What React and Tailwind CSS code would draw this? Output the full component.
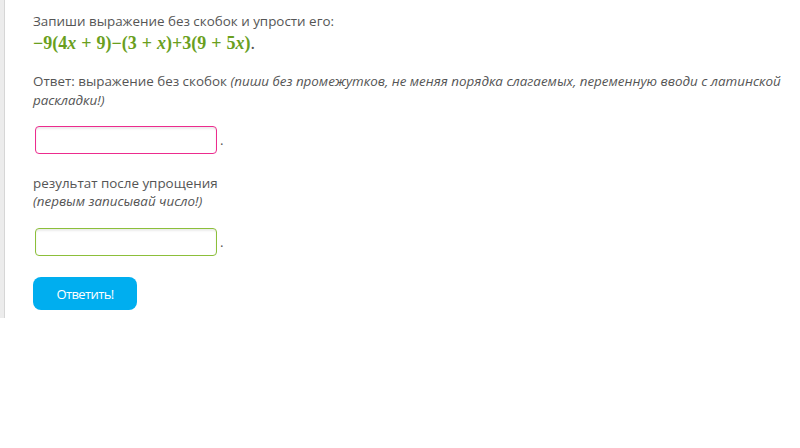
const Plus = () => <span className="inline-block mx-[5px]">+</span>;

export default function App() {
  return (
    <div className="w-[800px] h-[448px] bg-white" style={{ fontFamily: '"Open Sans", sans-serif' }}>
      <div className="h-[318px] w-[800px] flex">
        <div className="w-[5px] bg-[#ececec] border-r border-[#d6d6d6]" />
        <div className="flex-1 pl-[28px] pr-[10px] pt-[11px] text-[13.4px] leading-[20px] text-[#555]">
          <p>Запиши выражение без скобок и упрости его:</p>
          <p className="text-[18px] leading-[20px] mt-[1px]">
            <span className="text-[#6a9f1e] font-bold" style={{ fontFamily: '"Liberation Serif", serif' }}>
              −9(4<i>x</i><Plus />9)−(3<Plus /><i>x</i>)+3(9<Plus />5<i>x</i>)
            </span>
            <span className="text-[#555]" style={{ fontFamily: '"Liberation Serif", serif' }}>.</span>
          </p>
          <p className="mt-[19px] leading-[19px]">
            Ответ: выражение без скобок <i>(пиши без промежутков, не меняя порядка слагаемых, переменную вводи с латинской раскладки!)</i>
          </p>
          <div className="mt-[16px] flex items-end gap-[3px]">
            <input className="ml-[2px] w-[182px] h-[28px] rounded-[4px] border-[1.5px] border-[#ec2c8e] outline-none shadow-[inset_0_2px_2px_rgba(0,0,0,0.08)]" />
            <span className="leading-[20px] mb-[4px]">.</span>
          </div>
          <p className="mt-[20px] leading-[18px]">результат после упрощения</p>
          <p className="leading-[18px] italic">(первым записывай число!)</p>
          <div className="mt-[18px] flex items-end gap-[3px]">
            <input className="ml-[2px] w-[182px] h-[28px] rounded-[4px] border-[1.5px] border-[#8cbf3a] outline-none shadow-[inset_0_2px_2px_rgba(0,0,0,0.08)]" />
            <span className="leading-[20px] mb-[4px]">.</span>
          </div>
          <button className="mt-[21px] w-[104px] h-[33px] rounded-[8px] bg-[#00aeef] text-white text-[13px] tracking-[-0.6px]" style={{ fontFamily: '"Open Sans", sans-serif' }}>
            Ответить!
          </button>
        </div>
      </div>
    </div>
  );
}
